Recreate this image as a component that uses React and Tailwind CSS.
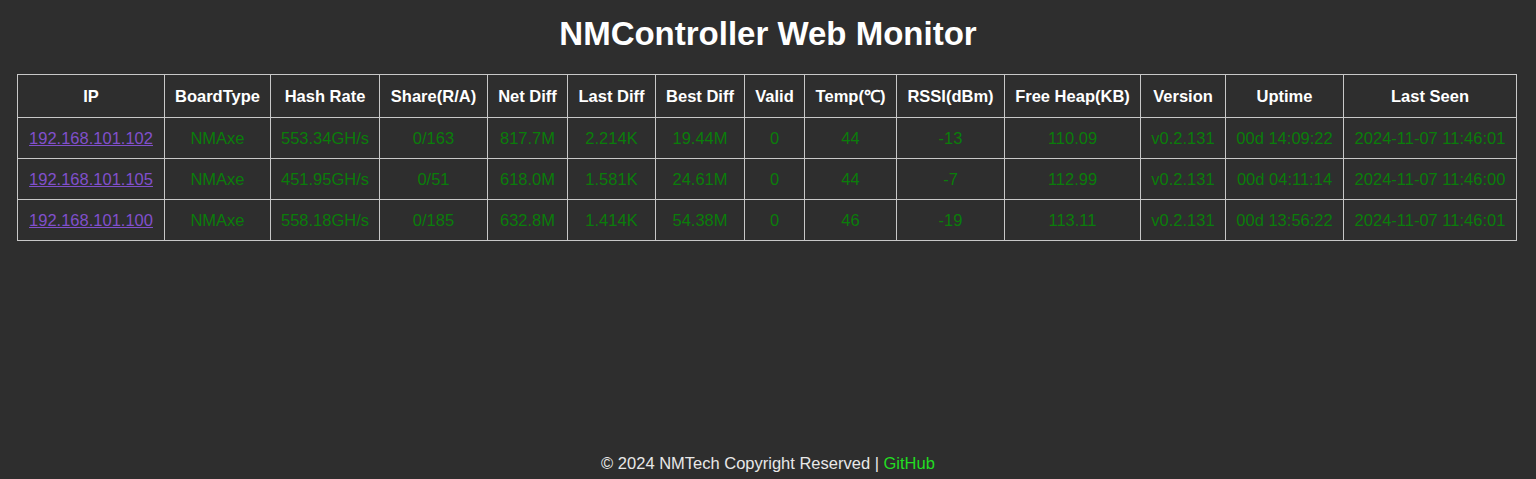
const headers = [
    ["IP", "w-[147px]"],
    ["BoardType", "w-[106px]"],
    ["Hash Rate", "w-[109px]"],
    ["Share(R/A)", "w-[108px]"],
    ["Net Diff", "w-[80px]"],
    ["Last Diff", "w-[88px]"],
    ["Best Diff", "w-[89px]"],
    ["Valid", "w-[60px]"],
    ["Temp(℃)", "w-[92px]"],
    ["RSSI(dBm)", "w-[108px]"],
    ["Free Heap(KB)", "w-[136px]"],
    ["Version", "w-[85px]"],
    ["Uptime", "w-[118px]"],
    ["Last Seen", "w-[173px]"],
]

const rows = [
    ["192.168.101.102", "NMAxe", "553.34GH/s", "0/163", "817.7M", "2.214K", "19.44M", "0", "44", "-13", "110.09", "v0.2.131", "00d 14:09:22", "2024-11-07 11:46:01"],
    ["192.168.101.105", "NMAxe", "451.95GH/s", "0/51", "618.0M", "1.581K", "24.61M", "0", "44", "-7", "112.99", "v0.2.131", "00d 04:11:14", "2024-11-07 11:46:00"],
    ["192.168.101.100", "NMAxe", "558.18GH/s", "0/185", "632.8M", "1.414K", "54.38M", "0", "46", "-19", "113.11", "v0.2.131", "00d 13:56:22", "2024-11-07 11:46:01"],
]

export default function App() {
    return (
        <div className="min-h-screen bg-[#2e2e2e] flex flex-col text-white font-['Liberation_Sans',Arial,sans-serif]">

            <h1 className="text-[33px] leading-[37px] font-bold text-center pt-[15px] pb-[22px]">
                NMController Web Monitor
            </h1>

            <div className="pl-[17px] pr-[20px]">
                <table className="w-[1499px] table-fixed border-collapse text-[16.5px]">
                    <thead>
                        <tr className="h-[43px]">
                            {headers.map(([h, w]) => (
                                <th key={h} className={`${w} border border-[#c8c8c8] font-bold text-center p-0`}>
                                    {h}
                                </th>
                            ))}
                        </tr>
                    </thead>
                    <tbody>
                        {rows.map(row => (
                            <tr key={row[0]} className="h-[41px]">
                                {row.map((cell, i) => (
                                    <td key={i} className="border border-[#c8c8c8] text-center text-[#0a7d0a] p-0">
                                        {i === 0 ? (
                                            <a href="#" className="text-[#8150cc] underline">{cell}</a>
                                        ) : cell}
                                    </td>
                                ))}
                            </tr>
                        ))}
                    </tbody>
                </table>
            </div>

            {/* footer */}
            <footer className="mt-auto text-center text-[16.5px] text-[#e8e8e8] pb-[6px] leading-[20px]">
                © 2024 NMTech Copyright Reserved | <a href="#" className="text-[#22dd22]">GitHub</a>
            </footer>

        </div>
    )
}
